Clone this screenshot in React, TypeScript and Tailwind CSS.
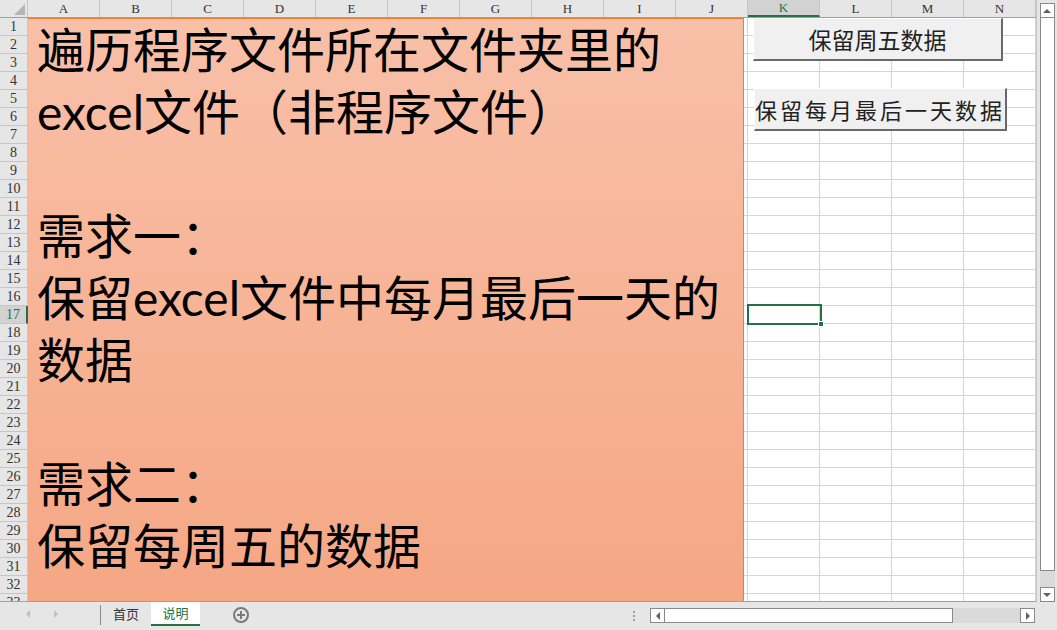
const cols = ["A", "B", "C", "D", "E", "F", "G", "H", "I", "J", "K", "L", "M", "N"];
const rows = Array.from({ length: 33 }, (_, i) => i + 1);

const lines = [
  "遍历程序文件所在文件夹里的",
  "excel文件（非程序文件）",
  "",
  "需求一：",
  "保留excel文件中每月最后一天的",
  "数据",
  "",
  "需求二：",
  "保留每周五的数据",
];

function ScrollButton({ dir }: { dir: "up" | "down" | "left" | "right" }) {
  return (
    <div className="w-[15px] h-[15px] bg-white border border-[#8a8a8a] flex items-center justify-center shrink-0">
      {dir === "up" && <div className="w-0 h-0 border-l-[4px] border-r-[4px] border-b-[4px] border-l-transparent border-r-transparent border-b-[#606060]" />}
      {dir === "down" && <div className="w-0 h-0 border-l-[4px] border-r-[4px] border-t-[4px] border-l-transparent border-r-transparent border-t-[#606060]" />}
      {dir === "left" && <div className="w-0 h-0 border-t-[4px] border-b-[4px] border-r-[4px] border-t-transparent border-b-transparent border-r-[#606060]" />}
      {dir === "right" && <div className="w-0 h-0 border-t-[4px] border-b-[4px] border-l-[4px] border-t-transparent border-b-transparent border-l-[#606060]" />}
    </div>
  );
}

export default function App() {
  return (
    <div className="w-[1057px] h-[630px] overflow-hidden bg-white flex flex-col font-['Noto_Sans_CJK_SC',sans-serif]">
      <div className="flex h-[602px]">
        {/* sheet */}
        <div className="relative w-[1036px] h-[602px] overflow-hidden border-b border-[#a0a0a0]">
          {/* column headers */}
          <div className="flex h-[18px] bg-[#e6e6e6] border-b border-[#9f9f9f]">
            <div className="relative w-[28px] h-full border-r border-[#c6c6c6]">
              <div className="absolute right-[2px] bottom-[2px] w-0 h-0 border-l-[11px] border-b-[11px] border-l-transparent border-b-[#b5b5b5]" />
            </div>
            {cols.map((c) => (
              <div
                key={c}
                className={
                  c === "K"
                    ? "w-[72px] h-full flex items-center justify-center bg-[#d2d2d2] border-r border-[#c6c6c6] border-b-2 border-b-[#217346] text-[#217346] text-[13px] font-['Liberation_Serif',serif]"
                    : "w-[72px] h-full flex items-center justify-center border-r border-[#c6c6c6] text-[#333] text-[13px] font-['Liberation_Serif',serif]"
                }
              >
                {c}
              </div>
            ))}
          </div>
          {/* rows */}
          {rows.map((r) => (
            <div key={r} className="flex h-[18px]">
              <div
                className={
                  r === 17
                    ? "w-[28px] h-full flex items-center justify-center bg-[#d2d2d2] border-b border-[#c6c6c6] border-r-2 border-r-[#217346] text-[#217346] text-[14px] font-['Liberation_Serif',serif]"
                    : "w-[28px] h-full flex items-center justify-center bg-[#e6e6e6] border-b border-r border-[#c6c6c6] text-[#333] text-[14px] font-['Liberation_Serif',serif]"
                }
              >
                {r}
              </div>
              {cols.map((c) => (
                <div key={c} className="w-[72px] h-full border-r border-b border-[#d4d4d4]" />
              ))}
            </div>
          ))}

          {/* text box shape */}
          <div className="absolute left-[28px] top-[18px] w-[716px] h-[600px] border-t border-r border-[#ed7d31] bg-linear-to-b from-[#f8c0a8] to-[#f5a683] pl-[9px] text-black text-[48px] leading-[62px] font-['Lato','Noto_Sans_CJK_SC',sans-serif] whitespace-nowrap">
            {lines.map((l, i) => (
              <div key={i} className="h-[62px]">
                {l}
              </div>
            ))}
          </div>

          {/* buttons */}
          <div className="absolute left-[753px] top-[18px] w-[250px] h-[43px] bg-[#f0f0f0] border-t border-l border-white border-r-2 border-b-2 border-r-[#696969] border-b-[#696969] flex items-center justify-center whitespace-nowrap text-[23px] text-[#222]">
            保留周五数据
          </div>
          <div className="absolute left-[754px] top-[88px] w-[253px] h-[43px] bg-[#f0f0f0] border-t border-l border-white border-r-2 border-b-2 border-r-[#696969] border-b-[#696969] flex items-center justify-center whitespace-nowrap text-[22px] tracking-[3px] text-[#222]">
            保留每月最后一天数据
          </div>

          {/* selected cell K17 */}
          <div className="absolute left-[747px] top-[304px] w-[75px] h-[21px] border-2 border-[#217346]">
            <div className="absolute right-[-4px] bottom-[-4px] w-[6px] h-[6px] bg-[#217346] border border-white" />
          </div>
        </div>

        {/* vertical scrollbar */}
        <div className="w-[21px] h-[602px] bg-[#e6e6e6] border-l border-[#c6c6c6] flex flex-col items-center pt-[3px]">
          <ScrollButton dir="up" />
          <div className="w-[15px] h-[553px] bg-white border border-[#8a8a8a] border-t-0" />
          <div className="w-[15px] flex-1 bg-[#dadada]" />
          <ScrollButton dir="down" />
        </div>
      </div>

      {/* sheet tab bar */}
      <div className="h-[28px] bg-[#e6e6e6] flex items-start text-[13px]">
        <div className="w-[100px] h-[24px] flex items-center">
          <div className="ml-[26px] w-0 h-0 border-t-[4px] border-b-[4px] border-r-[4px] border-t-transparent border-b-transparent border-r-[#c0c0c0]" />
          <div className="ml-[24px] w-0 h-0 border-t-[4px] border-b-[4px] border-l-[4px] border-t-transparent border-b-transparent border-l-[#c0c0c0]" />
        </div>
        <div className="w-px h-[20px] mt-[3px] bg-[#8a8a8a]" />
        <div className="w-[50px] h-[24px] flex items-center justify-center text-[#333]">首页</div>
        <div className="w-[49px] h-[24px] bg-white border-b-2 border-[#217346] flex items-center justify-center text-[#217346]">说明</div>
        <div className="ml-[33px] mt-[5px] w-[16px] h-[16px] rounded-full border-2 border-[#7a7a7a] flex items-center justify-center">
          <svg width="10" height="10" viewBox="0 0 10 10">
            <path d="M5 1v8M1 5h8" stroke="#7a7a7a" strokeWidth="2" />
          </svg>
        </div>
        <div className="ml-[384px] mt-[9px] flex flex-col gap-[2px]">
          <div className="w-[2px] h-[2px] bg-[#a0a0a0]" />
          <div className="w-[2px] h-[2px] bg-[#a0a0a0]" />
          <div className="w-[2px] h-[2px] bg-[#a0a0a0]" />
        </div>
        <div className="ml-[15px] mt-[6px] w-[385px] h-[16px] flex">
          <ScrollButton dir="left" />
          <div className="w-[288px] h-[15px] bg-white border border-[#8a8a8a] border-l-0" />
          <div className="flex-1 h-[15px] bg-[#dadada]" />
          <ScrollButton dir="right" />
        </div>
      </div>
    </div>
  );
}
